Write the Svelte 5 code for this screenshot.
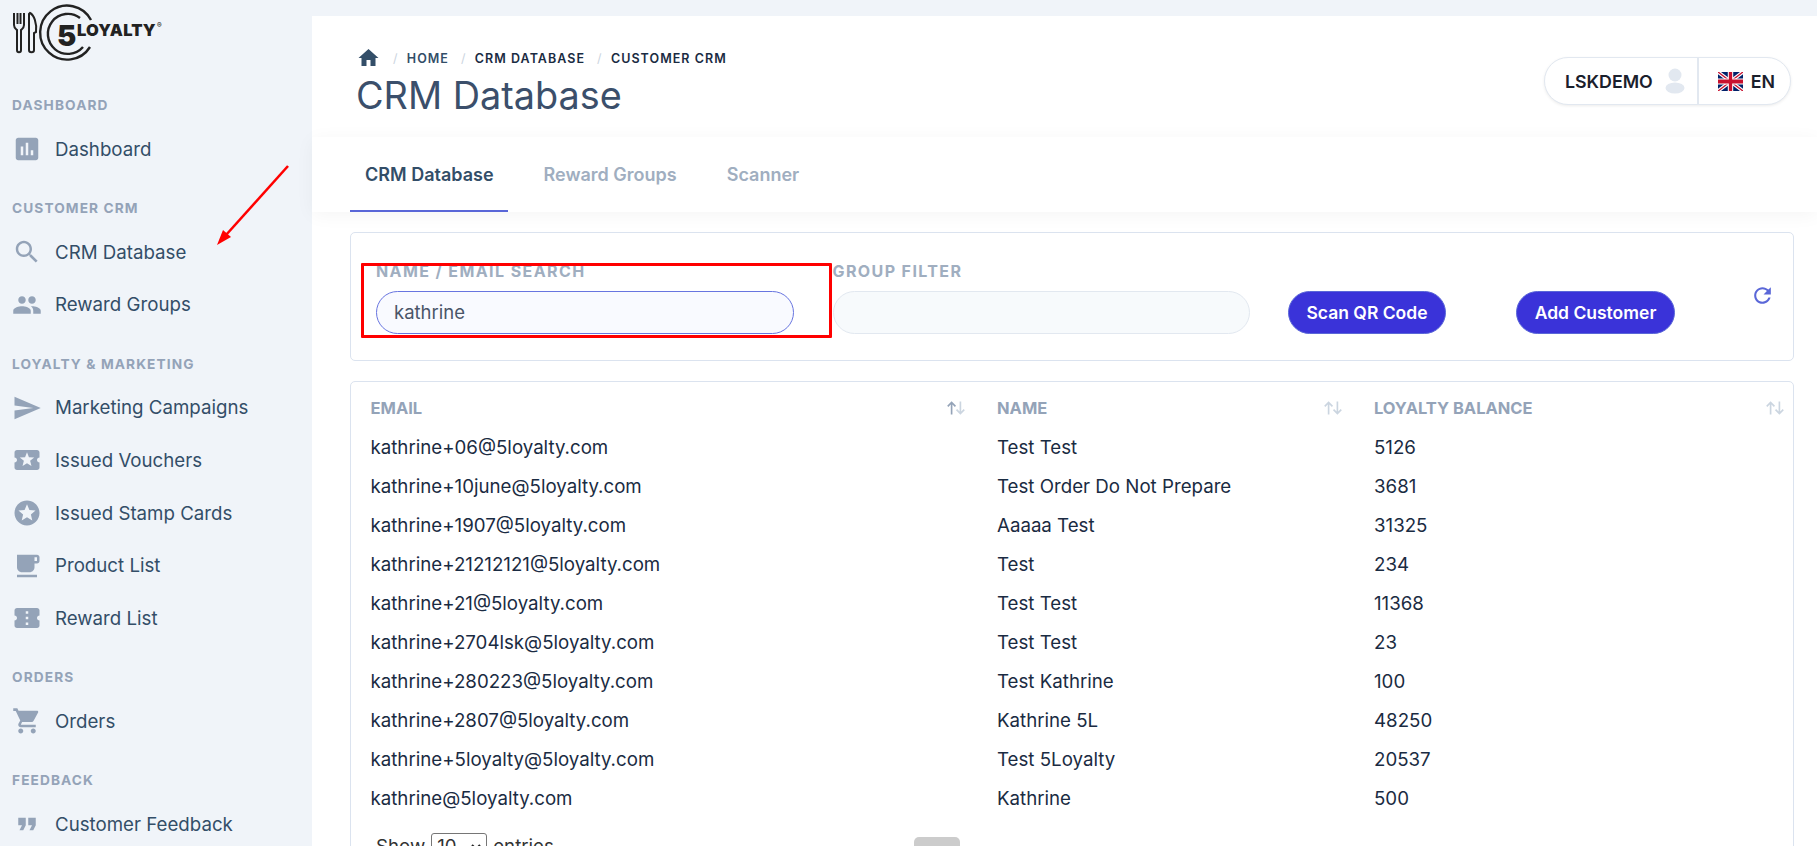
<script>
  const icons = {
    dashboard: 'M19 3H5c-1.1 0-2 .9-2 2v14c0 1.1.9 2 2 2h14c1.1 0 2-.9 2-2V5c0-1.1-.9-2-2-2zM9 17H7v-7h2v7zm4 0h-2V7h2v10zm4 0h-2v-4h2v4z',
    search: 'M15.5 14h-.79l-.28-.27C15.41 12.59 16 11.11 16 9.5 16 5.91 13.09 3 9.5 3S3 5.91 3 9.5 5.91 16 9.5 16c1.61 0 3.09-.59 4.23-1.57l.27.28v.79l5 4.99L20.49 19l-4.99-5zm-6 0C7.01 14 5 11.99 5 9.5S7.01 5 9.5 5 14 7.01 14 9.5 11.99 14 9.5 14z',
    group: 'M16 11c1.66 0 2.99-1.34 2.99-3S17.66 5 16 5c-1.66 0-3 1.34-3 3s1.34 3 3 3zm-8 0c1.66 0 2.99-1.34 2.99-3S9.66 5 8 5C6.34 5 5 6.34 5 8s1.34 3 3 3zm0 2c-2.33 0-7 1.17-7 3.5V19h14v-2.5c0-2.33-4.67-3.5-7-3.5zm8 0c-.29 0-.62.02-.97.05 1.16.84 1.97 1.97 1.97 3.45V19h6v-2.5c0-2.33-4.67-3.5-7-3.5z',
    send: 'M2.01 21L23 12 2.01 3 2 10l15 2-15 2z',
    voucher: 'M20 12c0-1.1.9-2 2-2V6c0-1.1-.9-2-2-2H4c-1.1 0-1.99.9-1.99 2v4c1.1 0 1.99.9 1.99 2s-.89 2-2 2v4c0 1.1.9 2 2 2h16c1.1 0 2-.9 2-2v-4c-1.1 0-2-.9-2-2zm-4.42 4.8L12 14.5l-3.58 2.3 1.08-4.12-3.29-2.69 4.24-.25L12 5.8l1.54 3.95 4.24.25-3.29 2.69 1.09 4.11z',
    stars: 'M11.99 2C6.47 2 2 6.48 2 12s4.47 10 9.99 10C17.52 22 22 17.52 22 12S17.52 2 11.99 2zm4.24 16L12 15.45 7.77 18l1.12-4.81-3.73-3.23 4.92-.42L12 5l1.92 4.53 4.92.42-3.73 3.23L16.23 18z',
    cafe: 'M20 3H4v10c0 2.21 1.79 4 4 4h6c2.21 0 4-1.79 4-4v-3h2c1.11 0 2-.89 2-2V5c0-1.11-.89-2-2-2zm0 5h-2V5h2v3zM4 19h16v2H4z',
    ticket: 'M22 10V6c0-1.11-.9-2-2-2H4c-1.1 0-1.99.89-1.99 2v4c1.1 0 1.99.9 1.99 2s-.89 2-2 2v4c0 1.1.9 2 2 2h16c1.1 0 2-.9 2-2v-4c-1.1 0-2-.9-2-2s.9-2 2-2zm-9 7.5h-2v-2h2v2zm0-4.5h-2v-2h2v2zm0-4.5h-2v-2h2v2z',
    cart: 'M7 18c-1.1 0-1.99.9-1.99 2S5.9 22 7 22s2-.9 2-2-.9-2-2-2zM1 2v2h2l3.6 7.59-1.35 2.45c-.16.28-.25.61-.25.96 0 1.1.9 2 2 2h12v-2H7.42c-.14 0-.25-.11-.25-.25l.03-.12.9-1.83h7.45c.75 0 1.41-.41 1.75-1.03l3.58-6.49c.08-.14.12-.31.12-.48 0-.55-.45-1-1-1H5.21l-.94-2H1zm16 16c-1.1 0-1.99.9-1.99 2s.89 2 1.99 2 2-.9 2-2-.9-2-2-2z',
    quote: 'M6 17h3l2-4V7H5v6h3zm8 0h3l2-4V7h-6v6h3z'
  };
  const nav = [
    { title: 'DASHBOARD', items: [['Dashboard', 'dashboard']] },
    { title: 'CUSTOMER CRM', items: [['CRM Database', 'search'], ['Reward Groups', 'group']] },
    { title: 'LOYALTY & MARKETING', items: [['Marketing Campaigns', 'send'], ['Issued Vouchers', 'voucher'], ['Issued Stamp Cards', 'stars'], ['Product List', 'cafe'], ['Reward List', 'ticket']] },
    { title: 'ORDERS', items: [['Orders', 'cart']] },
    { title: 'FEEDBACK', items: [['Customer Feedback', 'quote']] }
  ];
  const rows = [
    ['kathrine+06@5loyalty.com', 'Test Test', '5126'],
    ['kathrine+10june@5loyalty.com', 'Test Order Do Not Prepare', '3681'],
    ['kathrine+1907@5loyalty.com', 'Aaaaa Test', '31325'],
    ['kathrine+21212121@5loyalty.com', 'Test', '234'],
    ['kathrine+21@5loyalty.com', 'Test Test', '11368'],
    ['kathrine+2704lsk@5loyalty.com', 'Test Test', '23'],
    ['kathrine+280223@5loyalty.com', 'Test Kathrine', '100'],
    ['kathrine+2807@5loyalty.com', 'Kathrine 5L', '48250'],
    ['kathrine+5loyalty@5loyalty.com', 'Test 5Loyalty', '20537'],
    ['kathrine@5loyalty.com', 'Kathrine', '500']
  ];
  const columns = [['EMAIL', true], ['NAME', false], ['LOYALTY BALANCE', false]];
</script>

<div class="page">
  <aside class="sidebar">
    <svg class="logo" viewBox="0 0 165 66" width="165" height="66" aria-label="5Loyalty logo">
      <g fill="none" stroke="#222">
        <path d="M14 13v12c0 3 2 4 3 5v20c0 3 4 3 4 0V30c1-1 3-2 3-5V13M17.5 13v11M20.5 13v11" stroke-width="2" />
        <path d="M30 13c4 2 7 10 6 19l-2 1v17c0 3-5 3-5 0V14z" stroke-width="2" />
        <path d="M90 47A27 27 0 1 1 91 20" stroke-width="2.4" />
        <path d="M83 47A20 20 0 1 1 80 18" stroke-width="2.4" />
      </g>
      <text x="57" y="46" class="five">5</text>
      <text x="77" y="36" class="brand">LOYALTY</text>
      <text x="157" y="28" class="reg">®</text>
    </svg>
    {#each nav as group}
      <div class="nav-group">
        <div class="nav-title">{group.title}</div>
        {#each group.items as item}
          <div class="nav-item">
            <svg class="nav-icon" viewBox="0 0 24 24"><path d={icons[item[1]]} /></svg>
            <span>{item[0]}</span>
          </div>
        {/each}
      </div>
    {/each}
  </aside>

  <main class="main">
    <header class="header">
      <div>
        <nav class="crumbs">
          <svg class="home" viewBox="0 0 24 24"><path d="M10 20v-6h4v6h5v-8h3L12 3 2 12h3v8z" /></svg>
          <i>/</i><span class="light">HOME</span><i>/</i><span>CRM DATABASE</span><i>/</i><span>CUSTOMER CRM</span>
        </nav>
        <h1>CRM Database</h1>
      </div>
      <div class="pill">
        <div class="user">
          <span>LSKDEMO</span>
          <svg class="avatar" viewBox="0 0 20 26"><circle cx="10" cy="7" r="6.5" /><ellipse cx="10" cy="20" rx="9.5" ry="5.5" /></svg>
        </div>
        <div class="lang">
          <svg class="flag" viewBox="0 0 60 40" preserveAspectRatio="none">
            <rect width="60" height="40" fill="#012169" />
            <path d="M0 0L60 40M60 0L0 40" stroke="#fff" stroke-width="8" />
            <path d="M0 0L60 40M60 0L0 40" stroke="#c8102e" stroke-width="3" />
            <path d="M30 0V40M0 20H60" stroke="#fff" stroke-width="13" />
            <path d="M30 0V40M0 20H60" stroke="#c8102e" stroke-width="8" />
          </svg>
          <span>EN</span>
        </div>
      </div>
    </header>

    <div class="tabs">
      <div class="tab active">CRM Database</div>
      <div class="tab">Reward Groups</div>
      <div class="tab">Scanner</div>
    </div>

    <section class="filters card">
      <div class="field first">
        <div class="label">NAME / EMAIL SEARCH</div>
        <div class="input focus">kathrine</div>
      </div>
      <div class="field second">
        <div class="label">GROUP FILTER</div>
        <div class="input"></div>
      </div>
      <button class="btn scan">Scan QR Code</button>
      <button class="btn add">Add Customer</button>
      <svg class="refresh" viewBox="0 0 24 24"><path d="M17.65 6.35C16.2 4.9 14.21 4 12 4c-4.42 0-7.99 3.58-7.99 8s3.57 8 7.99 8c3.73 0 6.84-2.55 7.73-6h-2.08c-.82 2.33-3.04 4-5.65 4-3.31 0-6-2.69-6-6s2.69-6 6-6c1.66 0 3.14.69 4.22 1.78L13 11h7V4l-2.35 2.35z" /></svg>
    </section>

    <section class="table card">
      <div class="row head">
        {#each columns as col}
          <div class="cell">
            <span>{col[0]}</span>
            <svg class="sort" viewBox="0 0 20 14">
              <path class:on={col[1]} d="M6 13V2M2.5 5.5L6 2l3.5 3.5" />
              <path d="M14 1v11M10.5 8.5L14 12l3.5-3.5" />
            </svg>
          </div>
        {/each}
      </div>
      {#each rows as r}
        <div class="row">
          <div class="cell">{r[0]}</div>
          <div class="cell">{r[1]}</div>
          <div class="cell">{r[2]}</div>
        </div>
      {/each}
      <div class="footer">
        <div class="entries">Show <span class="select">10 <svg viewBox="0 0 10 6"><path d="M1 1l4 4 4-4" /></svg></span> entries</div>
        <div class="pager"></div>
      </div>
    </section>
  </main>

  <div class="highlight"></div>
  <svg class="arrow" viewBox="0 0 90 90">
    <path d="M71 4L9 73" stroke="#f00" stroke-width="2.6" fill="none" />
    <path d="M0 83L6 68L14 75z" fill="#f00" />
  </svg>
</div>

<style>
  :global(body) {
    margin: 0;
    background: #f0f4f9;
    font-family: Inter, "Noto Sans", sans-serif;
  }
  .page {
    position: relative;
    display: flex;
    height: 846px;
    overflow: hidden;
    background: #f0f4f9;
  }
  .sidebar {
    flex: 0 0 312px;
    box-sizing: border-box;
    padding: 0 0 0 12px;
  }
  .logo {
    display: block;
    margin: 0 0 29px -12px;
    height: 66px;
  }
  .five {
    font: 900 29px Inter, sans-serif;
    fill: #222;
  }
  .brand {
    font: 900 16.5px Inter, sans-serif;
    fill: #222;
    letter-spacing: .2px;
  }
  .reg {
    font: 700 7px Inter, sans-serif;
    fill: #222;
  }
  .nav-group { margin-bottom: 22.75px; }
  .nav-title {
    height: 20px;
    line-height: 20px;
    margin-bottom: 7.75px;
    font-size: 13.7px;
    font-weight: 700;
    letter-spacing: 1.1px;
    color: #94a3b8;
  }
  .nav-item {
    display: flex;
    align-items: center;
    height: 52.6px;
    font-size: 18.7px;
    color: #334e68;
    white-space: nowrap;
  }
  .nav-icon {
    width: 30px;
    height: 30px;
    margin-right: 13px;
    fill: #94a3b8;
    flex: none;
  }
  .main {
    flex: 1;
    min-width: 0;
    margin-top: 16px;
    background: #fff;
  }
  .header {
    display: flex;
    justify-content: space-between;
    height: 121px;
    box-sizing: border-box;
    padding: 32px 26px 0 44px;
  }
  .crumbs {
    display: flex;
    align-items: center;
    height: 20px;
    font-size: 12.5px;
    font-weight: 600;
    letter-spacing: 1.05px;
    color: #1a2b42;
  }
  .crumbs i {
    font-style: normal;
    font-weight: 400;
    color: #cbd5e0;
    margin: 0 9.25px 0 12px;
    letter-spacing: 0;
  }
  .crumbs .light { color: #334e68; }
  .home {
    width: 25px;
    height: 24px;
    fill: #334e68;
  }
  h1 {
    margin: 3px 0 0;
    font-size: 37.8px;
    font-weight: 400;
    line-height: 48px;
    color: #3b4f6b;
  }
  .pill {
    display: flex;
    height: 48px;
    margin-top: 9px;
    box-sizing: border-box;
    border: 1px solid #e2e8f0;
    border-radius: 24px;
    box-shadow: 0 1px 3px rgba(0, 0, 0, .08);
    font-size: 17.8px;
    font-weight: 600;
    color: #1a202c;
    background: #fff;
  }
  .user, .lang {
    display: flex;
    align-items: center;
  }
  .user {
    gap: 12px;
    padding: 0 12px 0 20px;
    border-right: 2px solid #e2e8f0;
  }
  .lang {
    gap: 8px;
    padding: 0 15px 0 19px;
  }
  .avatar {
    width: 20px;
    height: 26px;
    fill: #e2e8f0;
  }
  .flag {
    width: 25px;
    height: 19px;
  }
  .tabs {
    position: relative;
    display: flex;
    height: 75px;
    padding-left: 38px;
    background: #fff;
    box-shadow: 0 3px 18px rgba(0, 0, 0, .045);
  }
  .tab {
    box-sizing: border-box;
    height: 75px;
    line-height: 76px;
    padding: 0 14.5px 0 15px;
    margin-right: 20.5px;
    font-size: 18px;
    font-weight: 600;
    color: #a0aec0;
  }
  .tab.active {
    color: #334e68;
    border-bottom: 2px solid #5a67d8;
  }
  .card {
    box-sizing: border-box;
    margin-left: 38px;
    width: 1444px;
    border: 1px solid #dbe3ef;
    border-radius: 5px;
    background: #fff;
  }
  .filters {
    display: flex;
    align-items: flex-end;
    height: 129px;
    margin-top: 20px;
    padding: 0 0 26px 25px;
  }
  .field.first { width: 418px; margin-right: 38.5px; }
  .field.second { width: 417.5px; margin-right: 38px; }
  .label {
    font-size: 16px;
    font-weight: 700;
    letter-spacing: 1.4px;
    color: #a0aec0;
    line-height: 20px;
    margin-bottom: 10px;
    white-space: nowrap;
  }
  .input {
    box-sizing: border-box;
    height: 43px;
    line-height: 41px;
    padding: 0 17px;
    border: 1px solid #e2e8f0;
    border-radius: 22px;
    background: #f7fafc;
    font-size: 18.5px;
    color: #4a5568;
  }
  .input.focus {
    background: #f9faff;
    border-color: #6875e0;
  }
  .btn {
    height: 43px;
    width: 158px;
    border: 1px solid #5a67d8;
    border-radius: 22px;
    background: #3a33d9;
    color: #fff;
    font: 600 17.5px Inter, sans-serif;
    padding: 0;
    flex: none;
  }
  .add { width: 159px; margin-left: 70px; }
  .refresh {
    width: 25px;
    height: 25px;
    margin: 0 0 26px 75px;
    fill: #5a67d8;
    flex: none;
  }
  .table {
    margin-top: 20px;
  }
  .row {
    display: grid;
    grid-template-columns: 626.5px 377px 1fr;
    height: 39px;
    align-items: center;
    padding-left: 19.5px;
    font-size: 18.7px;
    color: #1a2b42;
  }
  .head {
    box-sizing: border-box;
    height: 45.5px;
    padding-top: 6px;
    font-size: 16.5px;
    font-weight: 700;
    color: #94a3b8;
  }
  .cell {
    display: flex;
    align-items: center;
    justify-content: space-between;
    padding-right: 30px;
    white-space: nowrap;
  }
  .cell:last-child { padding-right: 7px; }
  .sort {
    width: 22px;
    height: 16px;
    fill: none;
    stroke: #cbd5e0;
    stroke-width: 1.5;
  }
  .sort .on { stroke: #94a3b8; }
  .footer {
    display: grid;
    grid-template-columns: 538px 46px;
    padding: 15px 0 0 25px;
    font-size: 18.7px;
    color: #333;
  }
  .entries {
    display: flex;
    align-items: center;
    gap: 6px;
    height: 28px;
  }
  .select {
    display: inline-flex;
    align-items: center;
    justify-content: space-between;
    box-sizing: border-box;
    width: 56px;
    height: 28px;
    padding: 0 5px;
    border: 1px solid #767676;
    border-radius: 3px;
  }
  .select svg {
    width: 10px;
    height: 6px;
    fill: none;
    stroke: #222;
    stroke-width: 2;
  }
  .pager {
    height: 30px;
    margin-top: 4px;
    border-radius: 5px;
    background: #ccc;
  }
  .highlight {
    position: absolute;
    left: 361px;
    top: 263px;
    width: 471px;
    height: 75px;
    box-sizing: border-box;
    border: 3px solid #f00;
    border-radius: 1px;
  }
  .arrow {
    position: absolute;
    left: 217px;
    top: 162px;
    width: 90px;
    height: 90px;
  }
</style>
